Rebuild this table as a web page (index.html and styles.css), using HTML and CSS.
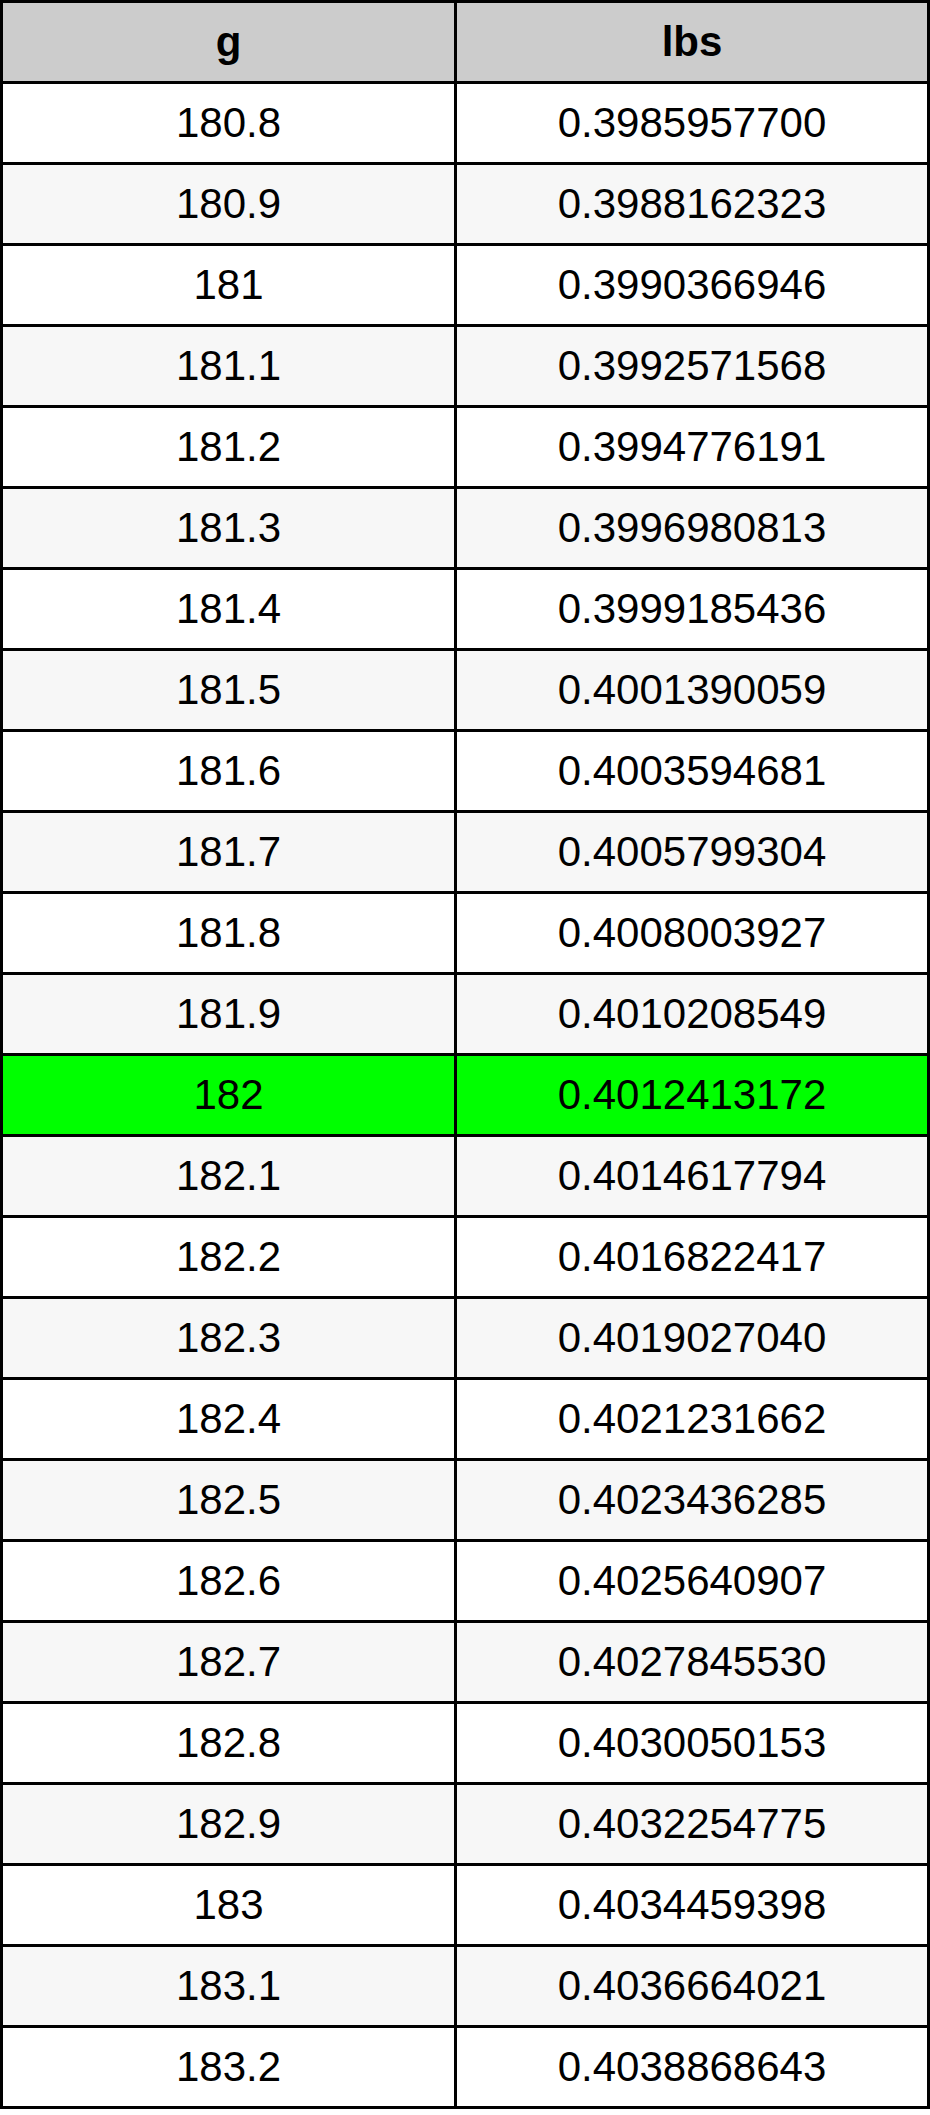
FILE: index.html
```html
<!DOCTYPE html>
<html>
<head>
<meta charset="utf-8">
<link rel="stylesheet" href="styles.css">
</head>
<body>
<table class="conv">
<thead>
<tr><th class="c1">g</th><th class="c2">lbs</th></tr>
</thead>
<tbody>
<tr><td>180.8</td><td>0.3985957700</td></tr>
<tr><td>180.9</td><td>0.3988162323</td></tr>
<tr><td>181</td><td>0.3990366946</td></tr>
<tr><td>181.1</td><td>0.3992571568</td></tr>
<tr><td>181.2</td><td>0.3994776191</td></tr>
<tr><td>181.3</td><td>0.3996980813</td></tr>
<tr><td>181.4</td><td>0.3999185436</td></tr>
<tr><td>181.5</td><td>0.4001390059</td></tr>
<tr><td>181.6</td><td>0.4003594681</td></tr>
<tr><td>181.7</td><td>0.4005799304</td></tr>
<tr><td>181.8</td><td>0.4008003927</td></tr>
<tr><td>181.9</td><td>0.4010208549</td></tr>
<tr class="hl"><td>182</td><td>0.4012413172</td></tr>
<tr><td>182.1</td><td>0.4014617794</td></tr>
<tr><td>182.2</td><td>0.4016822417</td></tr>
<tr><td>182.3</td><td>0.4019027040</td></tr>
<tr><td>182.4</td><td>0.4021231662</td></tr>
<tr><td>182.5</td><td>0.4023436285</td></tr>
<tr><td>182.6</td><td>0.4025640907</td></tr>
<tr><td>182.7</td><td>0.4027845530</td></tr>
<tr><td>182.8</td><td>0.4030050153</td></tr>
<tr><td>182.9</td><td>0.4032254775</td></tr>
<tr><td>183</td><td>0.4034459398</td></tr>
<tr><td>183.1</td><td>0.4036664021</td></tr>
<tr><td>183.2</td><td>0.4038868643</td></tr>
</tbody>
</table>
</body>
</html>
```
FILE: styles.css
```css
html, body {
  margin: 0;
  padding: 0;
  background: #ffffff;
}
.conv {
  border-collapse: separate;
  border-spacing: 3px;
  background: #000000;
  width: 930px;
  table-layout: fixed;
  font-family: "Liberation Sans", Arial, sans-serif;
  font-size: 42px;
  color: #000000;
}
.conv th, .conv td {
  height: 78px;
  padding: 0;
  text-align: center;
  vertical-align: middle;
  background: #ffffff;
  line-height: 1;
}
.conv th {
  background: #cccccc;
  font-weight: bold;
}
.conv .c1 { width: 451px; }
.conv .c2 { width: 470px; }
.conv tbody tr:nth-child(even) td {
  background: #f7f7f7;
}
.conv tbody tr.hl td {
  background: #00ff00;
}
```
